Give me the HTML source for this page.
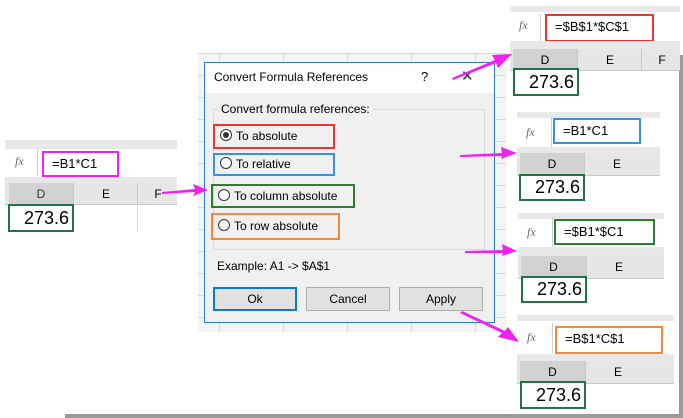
<!DOCTYPE html>
<html><head><style>
body{margin:0;width:683px;height:418px;position:relative;background:#fff;overflow:hidden;font-family:"Liberation Sans",sans-serif}
.a{position:absolute}
.hd{background:#e6e6e6;border-bottom:1px solid #c8c8c8}
.fx{font-family:"Liberation Serif",serif;font-style:italic;color:#666;font-size:12px}
.fb{background:#fff;font-size:13px;color:#000;padding-left:8px;box-sizing:border-box;line-height:22px}
.cell{border:2px solid #217346;box-sizing:border-box;font-size:18px;text-align:right;padding-right:3px;background:#fff}
.rb{display:inline-block;width:10px;height:10px;border:1px solid #333;border-radius:50%;background:#fff;vertical-align:-1px;margin-right:4px;position:relative}
.btn{position:absolute;top:287px;height:24px;width:84px;box-sizing:border-box;border:1px solid #adadad;background:#e1e1e1;font-size:12px;text-align:center;line-height:22px}
.opt{position:absolute;box-sizing:border-box;border:2px solid;font-size:12px;padding-left:5px;line-height:20px}
.gs{position:absolute;left:0;top:0;height:6px;background:#e8e8e8}
</style></head><body>

<div class="a" style="left:65px;top:414px;width:618px;height:4px;background:#9a9a9a"></div>
<div class="a" style="left:679px;top:55px;width:4px;height:363px;background:#9a9a9a"></div>

<!-- left excel -->
<div class="a" style="left:5px;top:140px;width:172px;height:95px;background:#fff">
 <div class="a" style="left:0;top:0;width:172px;height:9px;background:#e8e8e8"></div>
 <div class="a fx" style="left:10px;top:14px">fx</div>
 <div class="a" style="left:32px;top:9px;width:1px;height:27px;background:#d0d0d0"></div>
 <div class="a fb" style="left:37px;top:11px;width:77px;height:26px;border:2px solid #ee22ee">=B1*C1</div>
 <div class="a" style="left:0;top:37px;width:172px;height:6px;background:#e8e8e8"></div>
 <div class="a hd" style="left:0;top:43px;width:172px;height:21px"></div>
 <div class="a" style="left:4px;top:43px;width:64px;height:21px;background:#d2d2d2;text-align:center;font-size:12px;line-height:22px;color:#333">D</div>
 <div class="a" style="left:68px;top:43px;width:64px;height:21px;text-align:center;font-size:12px;line-height:22px;border-left:1px solid #c8c8c8">E</div>
 <div class="a" style="left:132px;top:43px;width:40px;height:21px;text-align:center;font-size:12px;line-height:22px;border-left:1px solid #c8c8c8">F</div>
 <div class="a cell" style="left:3px;top:64px;width:66px;height:28px;line-height:24px">273.6</div>
 <div class="a" style="left:132px;top:64px;width:1px;height:28px;background:#ddd"></div>
</div>

<!-- dialog background grid -->
<div class="a" style="left:198px;top:53px;width:308px;height:279px;background:#f4f4f4;
background-image:linear-gradient(90deg,#d8d8d8 1px,transparent 1px),linear-gradient(#d8d8d8 1px,transparent 1px);background-size:64px 100%,100% 22px;background-position:21px 0,0 0"></div>
<div class="a" style="left:204px;top:62px;width:291px;height:261px;border:1px solid #2b7bd4;background:#f0f0f0;box-sizing:border-box">
 <div class="a" style="left:0;top:0;width:289px;height:30px;background:#fff"></div>
 <div class="a" style="left:9px;top:7px;font-size:12px">Convert Formula References</div>
 <div class="a" style="left:216px;top:6px;font-size:13px">?</div>
 <div class="a" style="left:256px;top:4px;font-size:15px;color:#333">✕</div>
 <div class="a" style="left:8px;top:46px;width:272px;height:141px;border:1px solid #d8d8d8;box-sizing:border-box"></div>
 <div class="a" style="left:13px;top:39px;background:#f0f0f0;padding:0 3px;font-size:12px">Convert formula references:</div>
</div>
<div class="opt" style="left:213px;top:124px;width:122px;height:25px;border-color:#ee3333"><span class="rb"><span class="a" style="left:2px;top:2px;width:6px;height:6px;border-radius:50%;background:#333"></span></span>To absolute</div>
<div class="opt" style="left:213px;top:153px;width:122px;height:23px;border-color:#3a8fe0;line-height:19px"><span class="rb"></span>To relative</div>
<div class="opt" style="left:211px;top:184px;width:144px;height:24px;border-color:#2e7d32"><span class="rb"></span>To column absolute</div>
<div class="opt" style="left:211px;top:213px;width:129px;height:27px;border-color:#f08a3c;line-height:23px"><span class="rb"></span>To row absolute</div>
<div class="a" style="left:217px;top:259px;font-size:12px">Example: A1 -&gt; $A$1</div>
<div class="btn" style="left:213px;border:2px solid #0a78d7;line-height:20px">Ok</div>
<div class="btn" style="left:306px">Cancel</div>
<div class="btn" style="left:399px">Apply</div>

<!-- right panels -->
<div class="a" style="left:510px;top:6px;width:170px;height:92px">
 <div class="gs" style="width:170px"></div>
 <div class="a fx" style="left:9px;top:12px">fx</div>
 <div class="a" style="left:30px;top:8px;width:1px;height:28px;background:#d0d0d0"></div>
 <div class="a fb" style="left:35px;top:8px;width:109px;height:28px;border:2px solid #ee3333">=$B$1*$C$1</div>
 <div class="a" style="left:0;top:35px;width:170px;height:8px;background:#e8e8e8"></div>
 <div class="a hd" style="left:0;top:43px;width:170px;height:21px"></div>
 <div class="a" style="left:3px;top:43px;width:64px;height:21px;background:#d2d2d2;text-align:center;font-size:12px;line-height:22px">D</div>
 <div class="a" style="left:67px;top:43px;width:64px;height:21px;text-align:center;font-size:12px;line-height:22px;border-left:1px solid #c8c8c8">E</div>
 <div class="a" style="left:131px;top:43px;width:40px;height:21px;text-align:center;font-size:12px;line-height:22px;border-left:1px solid #c8c8c8">F</div>
 <div class="a cell" style="left:3px;top:62px;width:66px;height:28px;line-height:24px">273.6</div>
</div>

<div class="a" style="left:517px;top:112px;width:143px;height:90px">
 <div class="gs" style="width:143px"></div>
 <div class="a fx" style="left:9px;top:13px">fx</div>
 <div class="a" style="left:34px;top:5px;width:1px;height:30px;background:#d0d0d0"></div>
 <div class="a fb" style="left:36px;top:6px;width:88px;height:26px;border:2px solid #3a8fe0">=B1*C1</div>
 <div class="a" style="left:0;top:35px;width:143px;height:6px;background:#e8e8e8"></div>
 <div class="a hd" style="left:0;top:41px;width:143px;height:22px"></div>
 <div class="a" style="left:3px;top:41px;width:64px;height:22px;background:#d2d2d2;text-align:center;font-size:12px;line-height:22px">D</div>
 <div class="a" style="left:67px;top:41px;width:64px;height:22px;text-align:center;font-size:12px;line-height:22px;border-left:1px solid #c8c8c8">E</div>
 <div class="a cell" style="left:2px;top:62px;width:66px;height:27px;line-height:23px">273.6</div>
</div>

<div class="a" style="left:518px;top:213px;width:146px;height:90px">
 <div class="gs" style="width:146px"></div>
 <div class="a fx" style="left:9px;top:12px">fx</div>
 <div class="a" style="left:34px;top:4px;width:1px;height:30px;background:#d0d0d0"></div>
 <div class="a fb" style="left:36px;top:6px;width:101px;height:26px;border:2px solid #2e7d32">=$B1*$C1</div>
 <div class="a" style="left:0;top:34px;width:146px;height:9px;background:#e8e8e8"></div>
 <div class="a hd" style="left:0;top:43px;width:146px;height:22px"></div>
 <div class="a" style="left:3px;top:43px;width:65px;height:22px;background:#d2d2d2;text-align:center;font-size:12px;line-height:22px">D</div>
 <div class="a" style="left:68px;top:43px;width:64px;height:22px;text-align:center;font-size:12px;line-height:22px;border-left:1px solid #c8c8c8">E</div>
 <div class="a cell" style="left:3px;top:63px;width:66px;height:27px;line-height:23px">273.6</div>
</div>

<div class="a" style="left:517px;top:315px;width:157px;height:95px">
 <div class="gs" style="width:157px"></div>
 <div class="a fx" style="left:10px;top:15px">fx</div>
 <div class="a" style="left:35px;top:8px;width:1px;height:30px;background:#d0d0d0"></div>
 <div class="a fb" style="left:38px;top:11px;width:108px;height:28px;border:2px solid #f08a3c">=B$1*C$1</div>
 <div class="a" style="left:0;top:39px;width:157px;height:7px;background:#e8e8e8"></div>
 <div class="a hd" style="left:0;top:46px;width:157px;height:22px"></div>
 <div class="a" style="left:3px;top:46px;width:65px;height:22px;background:#d2d2d2;text-align:center;font-size:12px;line-height:22px">D</div>
 <div class="a" style="left:68px;top:46px;width:64px;height:22px;text-align:center;font-size:12px;line-height:22px;border-left:1px solid #c8c8c8">E</div>
 <div class="a cell" style="left:3px;top:66px;width:66px;height:28px;line-height:24px">273.6</div>
</div>

<svg class="a" style="left:0;top:0" width="683" height="418">
 <g fill="#ee22ee">
  <polygon points="162,192 195,189 193,184 208,190 193,196 195,192 162,194"/>
  <polygon points="452,78 495,60 492,55 512,54 498,68 496,63 453,80"/>
  <polygon points="460,155 502,153 501,147 517,153 501,159 502,156 460,157"/>
  <polygon points="465,251 503,250 502,244 517,251 502,256 503,253 465,253"/>
  <polygon points="460,313 502,333 498,337 519,342 508,327 505,331 462,311"/>
 </g>
</svg>
</body></html>
